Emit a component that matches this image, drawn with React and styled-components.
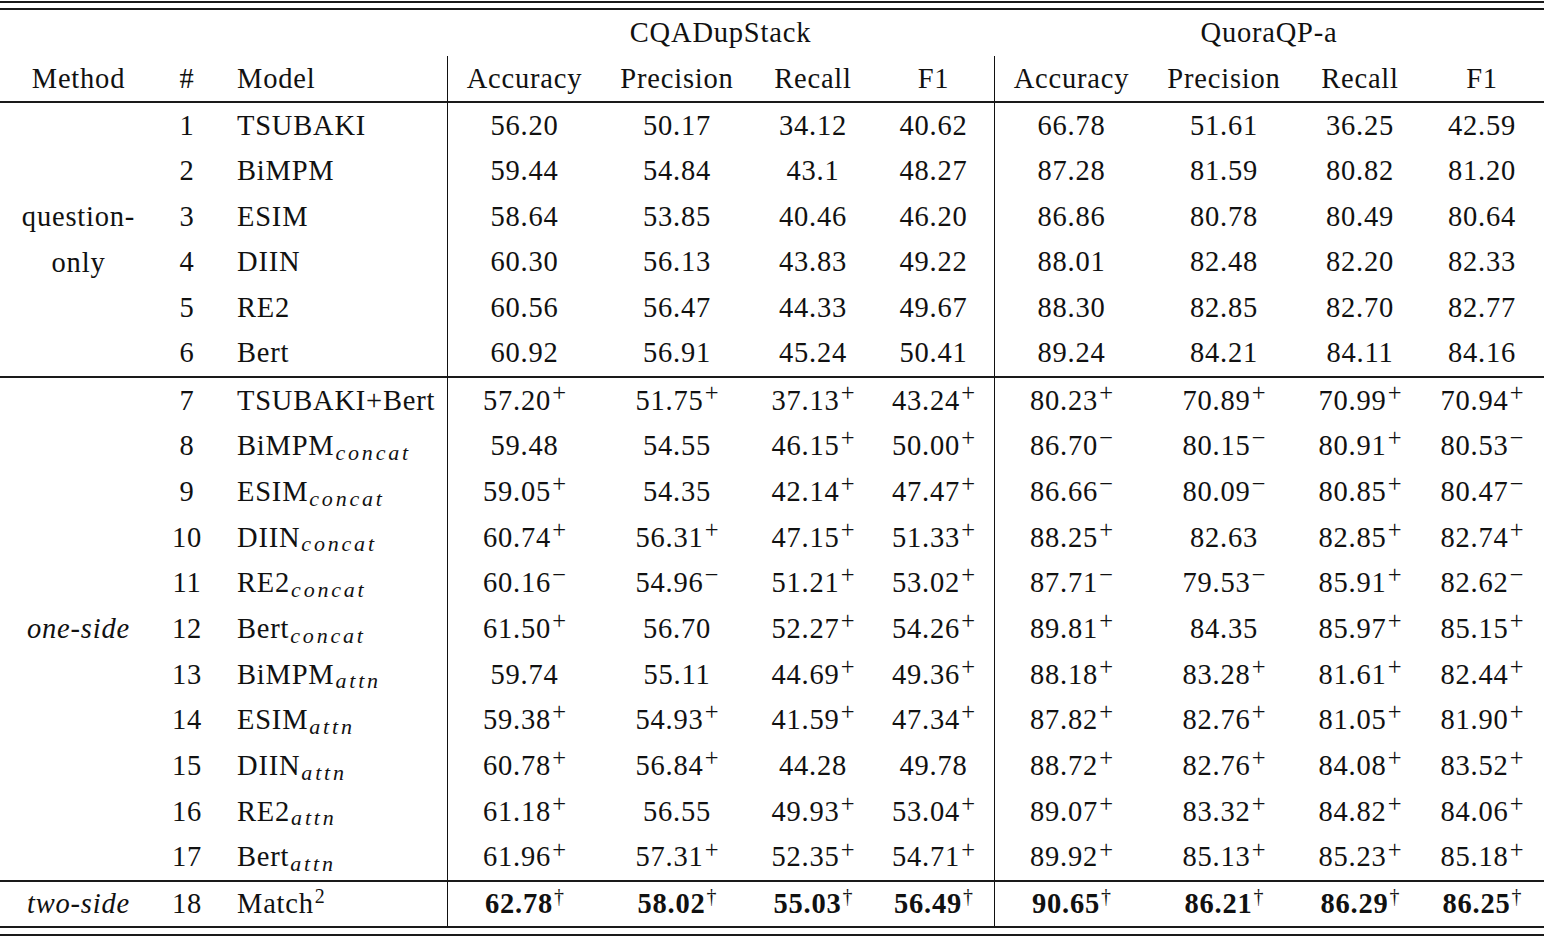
import React from "react";
import styled, { createGlobalStyle } from "styled-components";

const GlobalStyle = createGlobalStyle`
  html, body { margin: 0; padding: 0; background: #fff; }
  body {
    font-family: "Liberation Serif", "Times New Roman", serif;
    color: #111;
  }
`;

const Frame = styled.div`
  width: 1544px;
  margin-top: 1px;
  border-top: 2px solid #1a1a1a;
  border-bottom: 2px solid #1a1a1a;
  padding: 5px 0 6px;
`;

const Table = styled.table`
  width: 1544px;
  table-layout: fixed;
  border-collapse: separate;
  border-spacing: 0;
  border-top: 2px solid #1a1a1a;
  border-bottom: 2px solid #1a1a1a;
  font-size: 28.5px;
  letter-spacing: 0.8px;
`;

const GroupRow = styled.tr`
  height: 46px;
`;

const HeadRow = styled.tr`
  height: 47px;
`;

const BodyRow = styled.tr`
  height: ${(p) => p.$h}px;
`;

const GroupHead = styled.th`
  font-weight: normal;
  text-align: center;
  vertical-align: middle;
  padding: 0;
`;

const HeadCell = styled.th`
  font-weight: normal;
  text-align: ${(p) => p.$align || "center"};
  padding: 0 0 0 ${(p) => (p.$align === "left" ? "20px" : "0")};
  vertical-align: middle;
  border-bottom: 2px solid #1a1a1a;
  border-left: ${(p) => (p.$divider ? "1px solid #111" : "none")};
`;

const Cell = styled.td`
  text-align: ${(p) => p.$align || "center"};
  padding: 0 0 0 ${(p) => (p.$align === "left" ? "20px" : "0")};
  vertical-align: middle;
  white-space: nowrap;
  border-left: ${(p) => (p.$divider ? "1px solid #111" : "none")};
  border-top: ${(p) => (p.$rule ? "2px solid #1a1a1a" : "none")};
  font-weight: ${(p) => (p.$bold ? "bold" : "normal")};
  font-style: ${(p) => (p.$italic ? "italic" : "normal")};
  line-height: ${(p) => (p.$stack ? "45.6px" : "normal")};
`;

const Sup = styled.span`
  font-size: ${(p) => (p.$small ? "0.7em" : "0.86em")};
  font-weight: normal;
  letter-spacing: 0;
  vertical-align: ${(p) => (p.$small ? "0.5em" : "0.36em")};
  line-height: 0;
  margin-left: 1px;
`;

const Sub = styled.span`
  font-style: italic;
  font-size: 22px;
  letter-spacing: 2.8px;
  vertical-align: -0.22em;
  line-height: 0;
  margin-left: 1px;
`;

const groupOne = [
  ["1", "TSUBAKI", null, ["56.20", "50.17", "34.12", "40.62"], ["66.78", "51.61", "36.25", "42.59"]],
  ["2", "BiMPM", null, ["59.44", "54.84", "43.1", "48.27"], ["87.28", "81.59", "80.82", "81.20"]],
  ["3", "ESIM", null, ["58.64", "53.85", "40.46", "46.20"], ["86.86", "80.78", "80.49", "80.64"]],
  ["4", "DIIN", null, ["60.30", "56.13", "43.83", "49.22"], ["88.01", "82.48", "82.20", "82.33"]],
  ["5", "RE2", null, ["60.56", "56.47", "44.33", "49.67"], ["88.30", "82.85", "82.70", "82.77"]],
  ["6", "Bert", null, ["60.92", "56.91", "45.24", "50.41"], ["89.24", "84.21", "84.11", "84.16"]],
];

const groupTwo = [
  ["7", "TSUBAKI+Bert", null, ["57.20+", "51.75+", "37.13+", "43.24+"], ["80.23+", "70.89+", "70.99+", "70.94+"]],
  ["8", "BiMPM", "concat", ["59.48", "54.55", "46.15+", "50.00+"], ["86.70−", "80.15−", "80.91+", "80.53−"]],
  ["9", "ESIM", "concat", ["59.05+", "54.35", "42.14+", "47.47+"], ["86.66−", "80.09−", "80.85+", "80.47−"]],
  ["10", "DIIN", "concat", ["60.74+", "56.31+", "47.15+", "51.33+"], ["88.25+", "82.63", "82.85+", "82.74+"]],
  ["11", "RE2", "concat", ["60.16−", "54.96−", "51.21+", "53.02+"], ["87.71−", "79.53−", "85.91+", "82.62−"]],
  ["12", "Bert", "concat", ["61.50+", "56.70", "52.27+", "54.26+"], ["89.81+", "84.35", "85.97+", "85.15+"]],
  ["13", "BiMPM", "attn", ["59.74", "55.11", "44.69+", "49.36+"], ["88.18+", "83.28+", "81.61+", "82.44+"]],
  ["14", "ESIM", "attn", ["59.38+", "54.93+", "41.59+", "47.34+"], ["87.82+", "82.76+", "81.05+", "81.90+"]],
  ["15", "DIIN", "attn", ["60.78+", "56.84+", "44.28", "49.78"], ["88.72+", "82.76+", "84.08+", "83.52+"]],
  ["16", "RE2", "attn", ["61.18+", "56.55", "49.93+", "53.04+"], ["89.07+", "83.32+", "84.82+", "84.06+"]],
  ["17", "Bert", "attn", ["61.96+", "57.31+", "52.35+", "54.71+"], ["89.92+", "85.13+", "85.23+", "85.18+"]],
];

const best = [["62.78†", "58.02†", "55.03†", "56.49†"], ["90.65†", "86.21†", "86.29†", "86.25†"]];

const widths = [157, 60, 230, 154, 152, 120, 121, 154, 152, 120, 124];
const metrics = ["Accuracy", "Precision", "Recall", "F1"];

function Value({ text }) {
  const last = text.slice(-1);
  if (last === "+" || last === "−" || last === "†") {
    return (
      <>
        {text.slice(0, -1)}
        <Sup $small={last === "†"}>{last}</Sup>
      </>
    );
  }
  return <>{text}</>;
}

function Scores({ values, rule, bold }) {
  return values.map((set, g) =>
    set.map((v, i) => (
      <Cell key={`${g}-${i}`} $divider={i === 0} $rule={rule} $bold={bold}>
        <Value text={v} />
      </Cell>
    ))
  );
}

function ModelName({ name, sub }) {
  return (
    <>
      {name}
      {sub && <Sub>{sub}</Sub>}
    </>
  );
}

export default function App() {
  return (
    <>
      <GlobalStyle />
      <Frame>
        <Table>
          <colgroup>
            {widths.map((w, i) => (
              <col key={i} style={{ width: w }} />
            ))}
          </colgroup>
          <thead>
            <GroupRow>
              <GroupHead colSpan={3} />
              <GroupHead colSpan={4}>CQADupStack</GroupHead>
              <GroupHead colSpan={4}>QuoraQP-a</GroupHead>
            </GroupRow>
            <HeadRow>
              <HeadCell>Method</HeadCell>
              <HeadCell>#</HeadCell>
              <HeadCell $align="left">Model</HeadCell>
              {[0, 1].map((g) =>
                metrics.map((m, i) => (
                  <HeadCell key={`${g}-${m}`} $divider={i === 0}>
                    {m}
                  </HeadCell>
                ))
              )}
            </HeadRow>
          </thead>
          <tbody>
            {groupOne.map(([n, name, sub, a, b], r) => (
              <BodyRow key={n} $h={45.5}>
                {r === 0 && (
                  <Cell rowSpan={6} $stack>
                    question-
                    <br />
                    only
                  </Cell>
                )}
                <Cell>{n}</Cell>
                <Cell $align="left">
                  <ModelName name={name} sub={sub} />
                </Cell>
                <Scores values={[a, b]} />
              </BodyRow>
            ))}
            {groupTwo.map(([n, name, sub, a, b], r) => (
              <BodyRow key={n} $h={r === 0 ? 47.3 : 45.7}>
                {r === 0 && (
                  <Cell rowSpan={11} $italic $rule>
                    one-side
                  </Cell>
                )}
                <Cell $rule={r === 0}>{n}</Cell>
                <Cell $align="left" $rule={r === 0}>
                  <ModelName name={name} sub={sub} />
                </Cell>
                <Scores values={[a, b]} rule={r === 0} />
              </BodyRow>
            ))}
            <BodyRow $h={45.7}>
              <Cell $italic $rule>
                two-side
              </Cell>
              <Cell $rule>18</Cell>
              <Cell $align="left" $rule>
                Match<Sup $small>2</Sup>
              </Cell>
              <Scores values={best} rule bold />
            </BodyRow>
          </tbody>
        </Table>
      </Frame>
    </>
  );
}
